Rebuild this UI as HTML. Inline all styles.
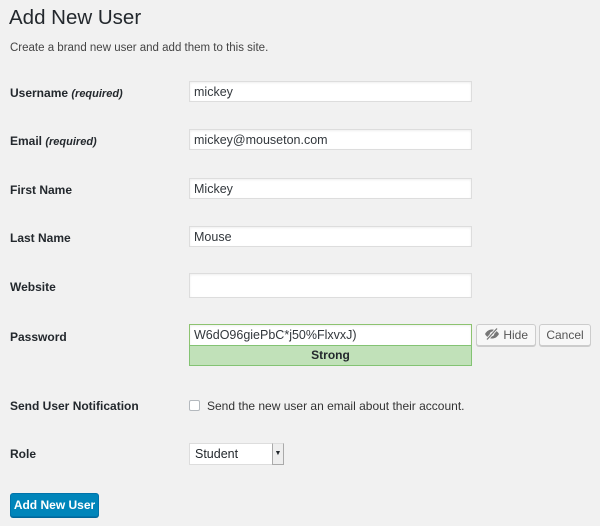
<!DOCTYPE html>
<html><head><meta charset="utf-8"><style>
*{box-sizing:border-box;margin:0;padding:0}
body{width:600px;height:526px;background:#f1f1f1;font-family:"Liberation Sans",sans-serif;font-size:12px;color:#23282d;position:relative;overflow:hidden}
.a{position:absolute}
h1{position:absolute;left:9px;top:6px;font-size:20.5px;font-weight:400;color:#23282d}
.lbl{position:absolute;left:10px;font-weight:bold;font-size:12px;color:#23282d}
.lbl i{font-size:11px}
.in{position:absolute;left:189px;width:283px;height:21px;background:#fff;border:1px solid #ddd;box-shadow:inset 0 1px 2px rgba(0,0,0,.07);font-size:12.5px;padding:3px 4px;color:#32373c}
.btn{position:absolute;top:324px;height:22px;background:#f7f7f7;border:1px solid #ccc;border-radius:3px;box-shadow:0 1px 0 #ccc;font-size:12px;color:#555;text-align:center;line-height:20px}
</style></head><body>
<h1>Add New User</h1>
<div class="a" style="left:10px;top:42px;font-size:11.5px;color:#444">Create a brand new user and add them to this site.</div>

<div class="lbl" style="top:86px">Username <i>(required)</i></div>
<div class="in" style="top:81px">mickey</div>
<div class="lbl" style="top:134px">Email <i>(required)</i></div>
<div class="in" style="top:129px">mickey@mouseton.com</div>
<div class="lbl" style="top:183px">First Name</div>
<div class="in" style="top:178px">Mickey</div>
<div class="lbl" style="top:231px">Last Name</div>
<div class="in" style="top:226px">Mouse</div>
<div class="lbl" style="top:280px">Website</div>
<div class="in" style="top:273px;height:25px"></div>
<div class="lbl" style="top:330px">Password</div>
<div class="in" style="top:324px;height:22px;border-color:#8dc370">W6dO96giePbC*j50%FlxvxJ)</div>
<div class="a" style="left:189px;top:345px;width:283px;height:21px;background:#c1e1b9;border:1px solid #83c373;text-align:center;font-weight:bold;line-height:19px;font-size:12px">Strong</div>
<div class="btn" style="left:476px;width:60px"><svg width="16" height="12" viewBox="0 0 16 12" style="vertical-align:-1px"><path d="M1 6C3 2.5 5.5 1.5 8 1.5S13 2.5 15 6C13 9.5 10.5 10.5 8 10.5S3 9.5 1 6Z" fill="#777"/><circle cx="8" cy="6" r="2.2" fill="#f7f7f7"/><path d="M3 11.5L13 0.5" stroke="#f7f7f7" stroke-width="3"/><path d="M3 11.5L13 0.5" stroke="#777" stroke-width="1.3"/></svg> Hide</div>
<div class="btn" style="left:539px;width:52px">Cancel</div>

<div class="lbl" style="top:399px">Send User Notification</div>
<div class="a" style="left:189px;top:400px;width:11px;height:11px;background:#fff;border:1px solid #b4b9be;border-radius:2px"></div>
<div class="a" style="left:207px;top:399px;font-size:12px;color:#333">Send the new user an email about their account.</div>

<div class="lbl" style="top:447px">Role</div>
<div class="a" style="left:189px;top:443px;width:95px;height:22px;background:#fff;border:1px solid #ddd;font-size:12.5px;padding:3px 5px">Student</div>
<div class="a" style="left:272px;top:443px;width:12px;height:22px;background:#eee;border:1px solid #aaa;border-top-color:#ddd;font-size:7px;text-align:center;line-height:20px">▼</div>

<div class="a" style="left:10px;top:493px;width:89px;height:24px;background:#0085ba;border:1px solid #0073aa;border-radius:3px;box-shadow:0 1px 0 #006799;color:#fff;font-size:12px;font-weight:bold;text-align:center;line-height:22px">Add New User</div>
</body></html>
